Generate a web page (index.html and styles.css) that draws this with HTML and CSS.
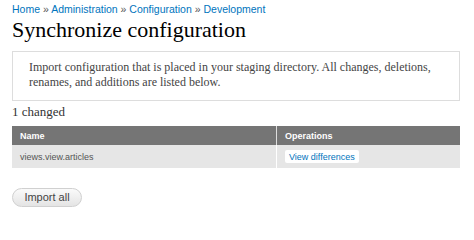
FILE: index.html
```html
<!DOCTYPE html>
<html>
<head>
<meta charset="utf-8">
<link rel="stylesheet" href="styles.css">
</head>
<body>
<div class="page">
  <nav class="breadcrumb"><a href="#">Home</a> » <a href="#">Administration</a> » <a href="#">Configuration</a> » <a href="#">Development</a></nav>
  <h1 class="title">Synchronize configuration</h1>
  <div class="help">Import configuration that is placed in your staging directory. All changes, deletions, renames, and additions are listed below.</div>
  <h3 class="count">1 changed</h3>
  <table class="diff">
    <thead>
      <tr><th class="c-name">Name</th><th class="c-ops">Operations</th></tr>
    </thead>
    <tbody>
      <tr><td class="c-name">views.view.articles</td><td class="c-ops"><a class="btn-diff" href="#">View differences</a></td></tr>
    </tbody>
  </table>
  <div class="actions"><button class="btn-import">Import all</button></div>
</div>
</body>
</html>
```
FILE: styles.css
```css
html, body { margin: 0; padding: 0; background: #fff; }
.page { padding: 3px 14px 0 12px; }
.breadcrumb { font-family: "Liberation Sans", Arial, sans-serif; font-size: 10.5px; line-height: 13px; color: #555; }
.breadcrumb a { color: #0074bd; text-decoration: none; }
.title { font-family: "Liberation Serif", serif; font-weight: normal; font-size: 22px; line-height: 28px; margin: 0 0 7px; color: #000; }
.help { border: 1px solid #ddd; padding: 8px 16px 10px 16px; font-family: "Liberation Serif", serif; font-size: 12px; line-height: 15px; color: #444; }
.count { font-family: "Liberation Serif", serif; font-weight: normal; font-size: 13px; line-height: 16px; margin: 3px 0 6px; color: #333; }
.diff { width: 100%; border-collapse: collapse; font-family: "Liberation Sans", Arial, sans-serif; font-size: 9px; }
.diff th { background: #757575; color: #fff; text-align: left; font-weight: bold; height: 19px; padding: 0 8px; border-right: 1px solid #ddd; }
.diff td { background: #e6e6e6; color: #555; height: 23px; padding: 0 8px; border-right: 1px solid #fff; }
.diff .c-name { width: 248px; }
.diff th.c-ops, .diff td.c-ops { border-right: none; }
.btn-diff { display: inline-block; background: #fff; color: #0074bd; text-decoration: none; padding: 2px 4px 1px; line-height: 10px; border-radius: 2px; }
.actions { margin-top: 19px; }
.btn-import { font-family: "Liberation Sans", Arial, sans-serif; font-size: 11px; color: #444; background: linear-gradient(#fafafa, #e4e4e4); border: 1px solid #d0d0d0; border-radius: 10px; width: 70px; height: 19px; padding: 0; }
```
